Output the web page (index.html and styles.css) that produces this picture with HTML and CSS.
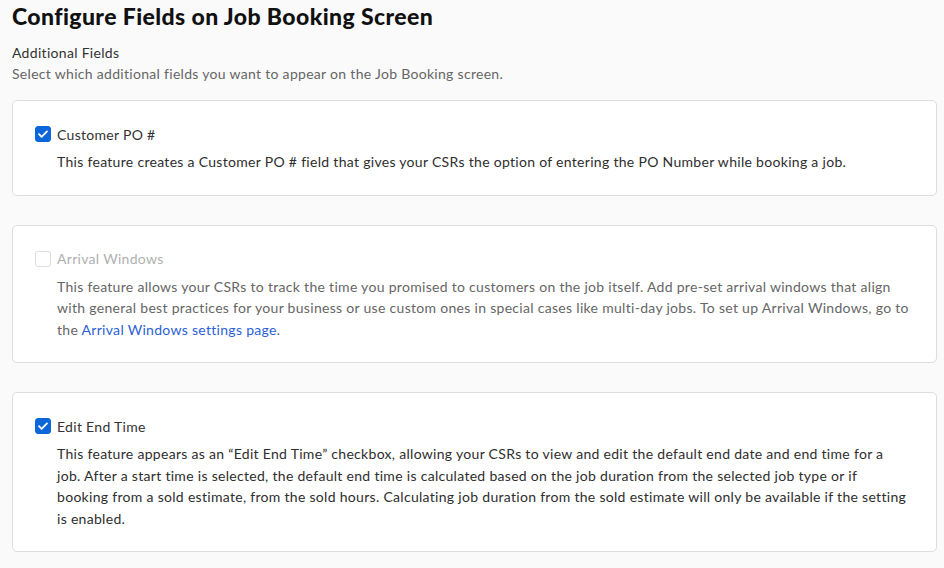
FILE: index.html
```html
<!DOCTYPE html>
<html lang="en">
<head>
    <meta charset="UTF-8">
    <meta name="viewport" content="width=device-width, initial-scale=1.0">
    <title>Configure Fields on Job Booking Screen</title>
    <link rel="stylesheet" href="styles.css">
</head>
<body>
    <div class="page">
        <h1>Configure Fields on Job Booking Screen</h1>

        <div class="section-head">
            <div class="section-title">Additional Fields</div>
            <div class="section-sub">Select which additional fields you want to appear on the Job Booking screen.</div>
        </div>

        <div class="field-card">
            <div class="field-row">
                <span class="check checked">
                    <svg viewBox="0 0 16 16" width="16" height="16"><path d="M4 8.2l2.6 2.6L12 5.4" fill="none" stroke="#fff" stroke-width="1.8" stroke-linecap="round" stroke-linejoin="round"/></svg>
                </span>
                <span class="field-label">Customer PO #</span>
            </div>
            <p class="field-desc">This feature creates a Customer PO # field that gives your CSRs the option of entering the PO Number while booking a job.</p>
        </div>

        <div class="field-card disabled">
            <div class="field-row">
                <span class="check"></span>
                <span class="field-label">Arrival Windows</span>
            </div>
            <p class="field-desc">This feature allows your CSRs to track the time you promised to customers on the job itself. Add pre-set arrival windows that align with general best practices for your business or use custom ones in special cases like multi-day jobs. To set up Arrival Windows, go to the <a href="#">Arrival Windows settings page</a>.</p>
        </div>

        <div class="field-card">
            <div class="field-row">
                <span class="check checked">
                    <svg viewBox="0 0 16 16" width="16" height="16"><path d="M4 8.2l2.6 2.6L12 5.4" fill="none" stroke="#fff" stroke-width="1.8" stroke-linecap="round" stroke-linejoin="round"/></svg>
                </span>
                <span class="field-label">Edit End Time</span>
            </div>
            <p class="field-desc">This feature appears as an &ldquo;Edit End Time&rdquo; checkbox, allowing your CSRs to view and edit the default end date and end time for a job. After a start time is selected, the default end time is calculated based on the job duration from the selected job type or if booking from a sold estimate, from the sold hours. Calculating job duration from the sold estimate will only be available if the setting is enabled.</p>
        </div>
    </div>
</body>
</html>
```

FILE: styles.css
```css
body {
    margin: 0;
    background: #fafafa;
    font-family: Lato, "Open Sans", sans-serif;
    color: #333;
}
.page {
    padding: 3px 7px 0 12px;
}
h1 {
    margin: 0;
    font-weight: 900;
    font-size: 23px;
    letter-spacing: 0.4px;
    line-height: 26px;
    color: #111;
}
.section-head {
    margin-top: 14px;
    font-size: 14px;
    letter-spacing: 0.3px;
    line-height: 20px;
}
.section-title {
    color: #333;
}
.section-sub {
    color: #666;
    margin-top: 1px;
}
.field-card {
    background: #fff;
    border: 1px solid #ddd;
    border-radius: 5px;
    margin-top: 16px;
    margin-bottom: 29px;
    padding: 23px 27px 22px 22px;
}
.field-card + .field-card {
    margin-top: 0;
}
.field-row {
    display: flex;
    align-items: center;
    gap: 6px;
    height: 20px;
}
.check {
    width: 16px;
    height: 16px;
    box-sizing: border-box;
    border: 1px solid #d0d0d0;
    border-radius: 3px;
    background: #fff;
    display: flex;
}
.check.checked {
    background: #0b66d9;
    border-color: #0b66d9;
}
.check svg {
    margin: -1px;
}
.field-label {
    font-size: 14px;
    letter-spacing: 0.3px;
    color: #333;
}
.field-desc {
    margin: 7px 0 0 22px;
    font-size: 14px;
    letter-spacing: 0.3px;
    line-height: 21.5px;
    color: #2e2e2e;
}
.disabled .field-label {
    color: #b0b0b0;
}
.disabled .check {
    border-color: #ddd;
}
.disabled .field-desc {
    color: #666;
}
.field-desc a {
    color: #2a62d6;
    text-decoration: none;
}
```
